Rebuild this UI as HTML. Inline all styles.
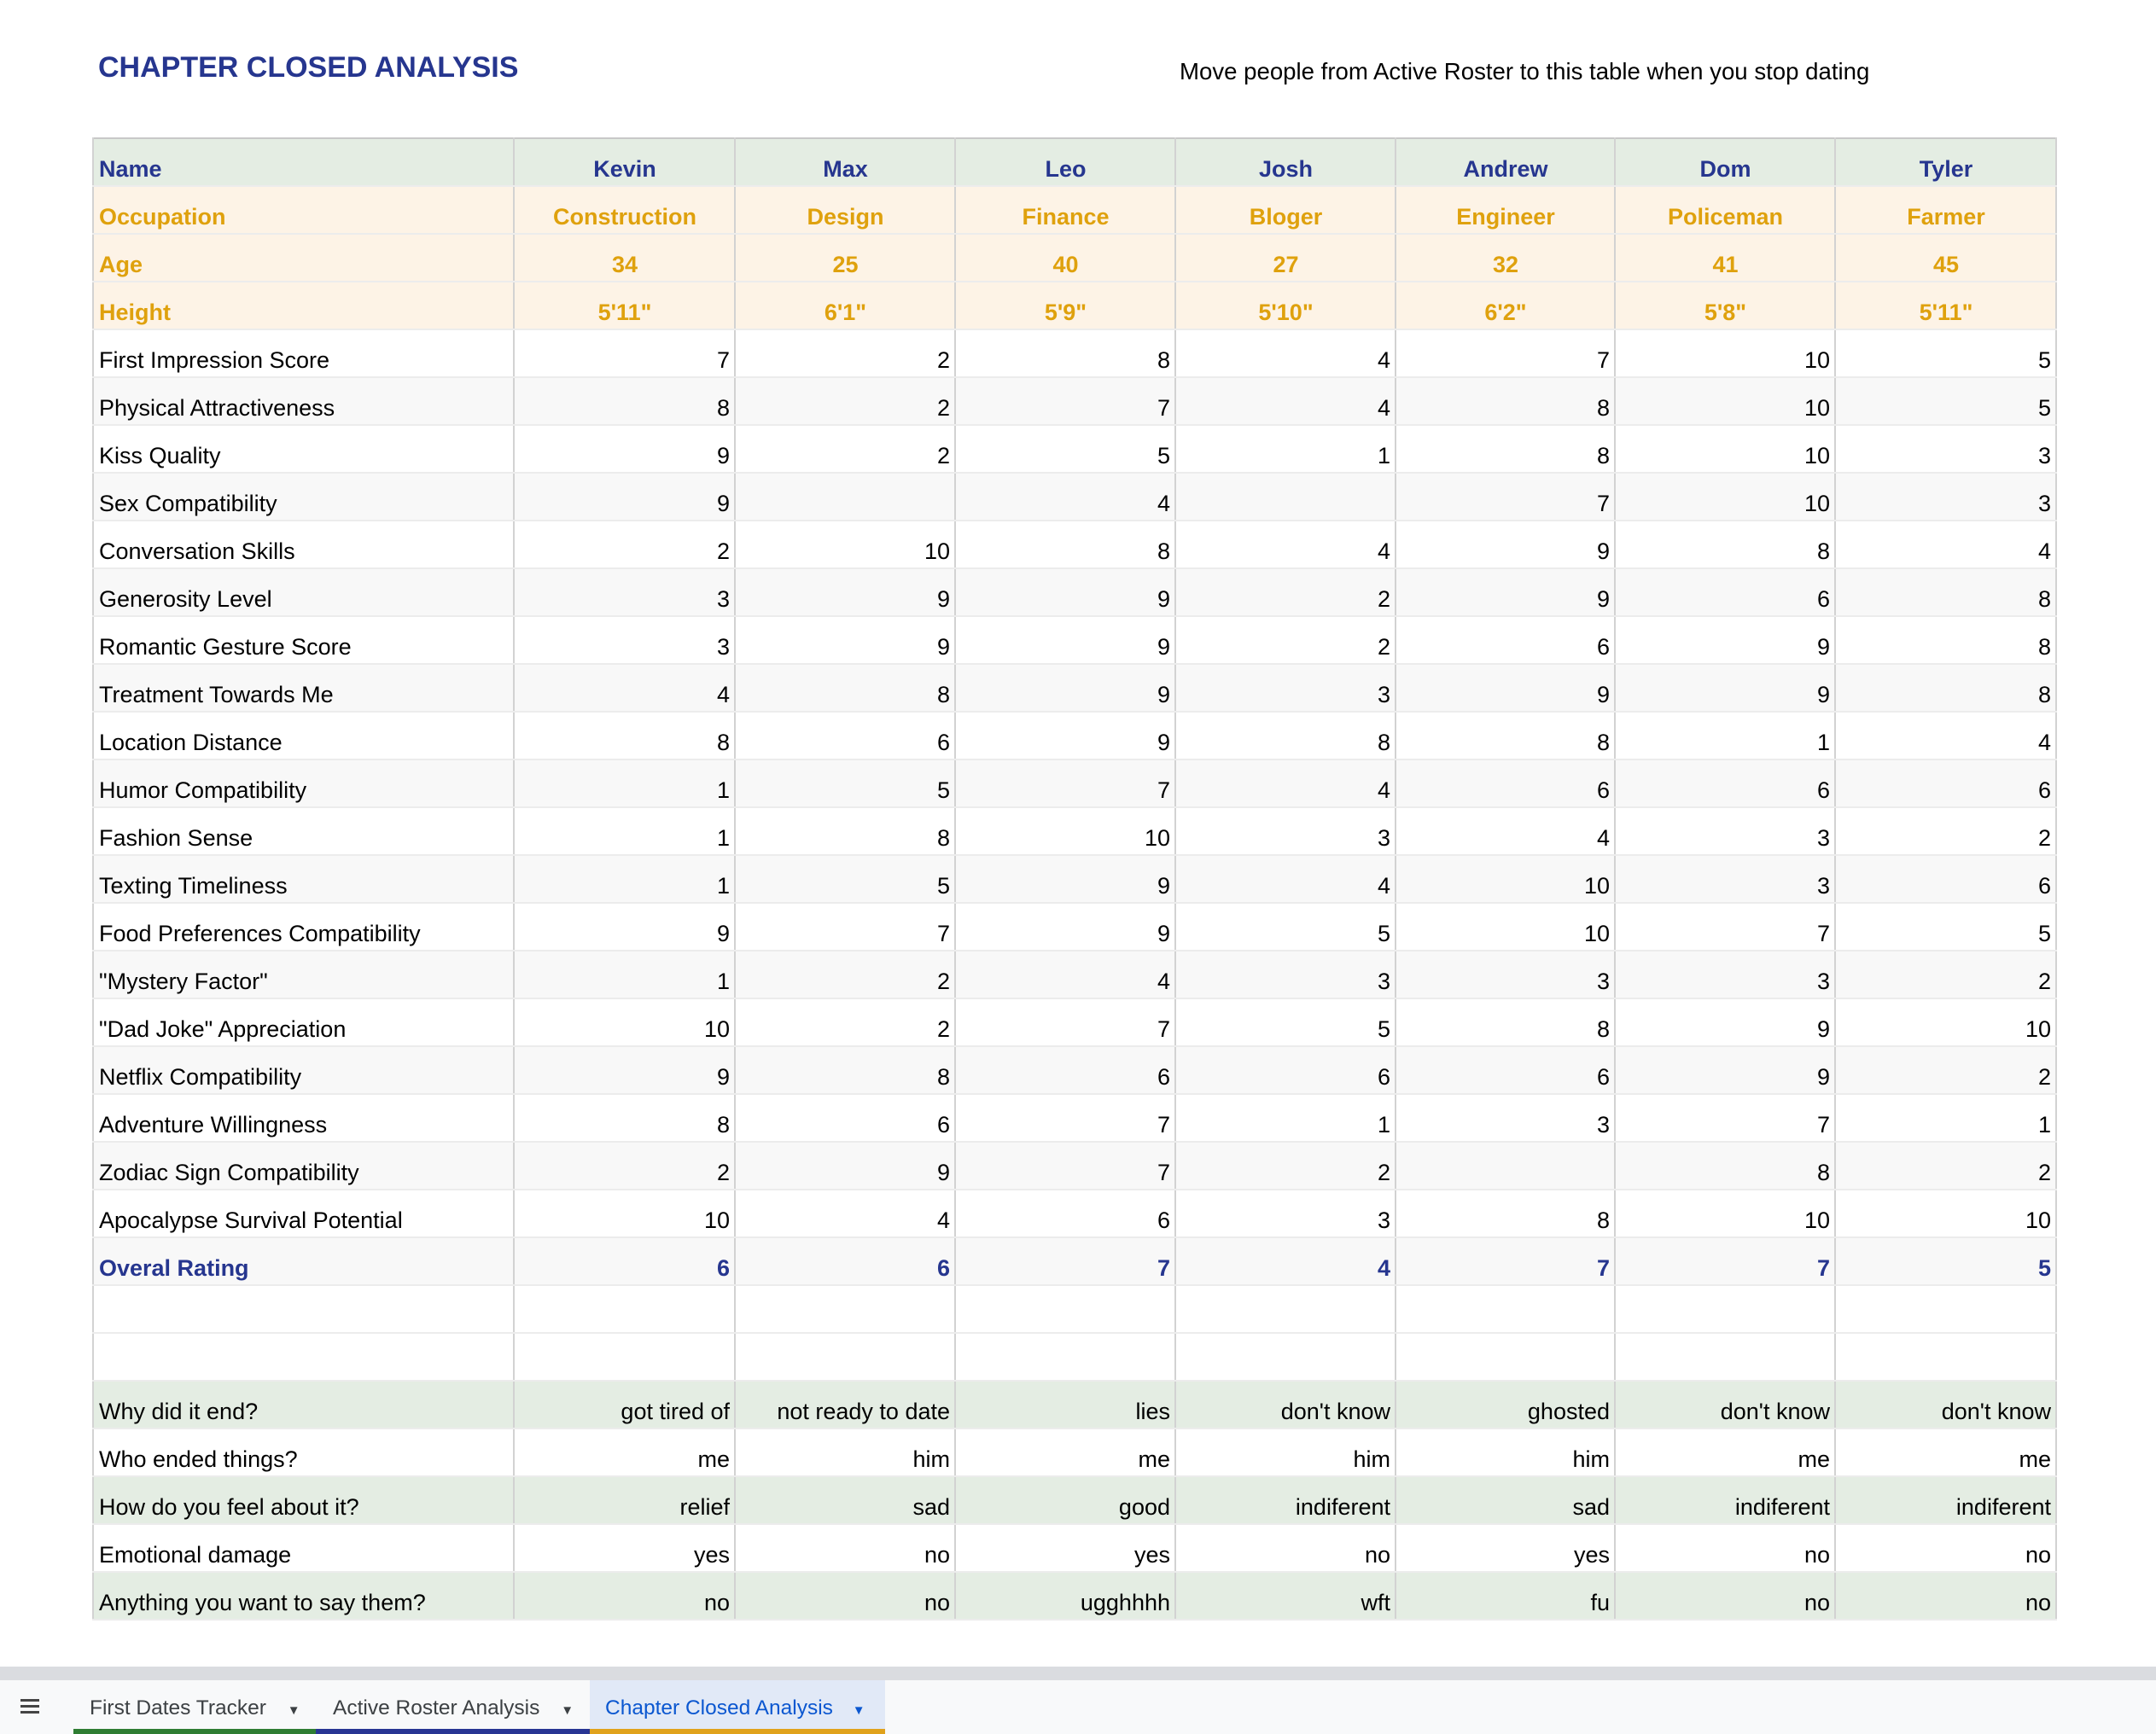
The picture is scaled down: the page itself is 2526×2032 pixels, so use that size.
<!DOCTYPE html>
<html><head><meta charset="utf-8">
<style>
*{box-sizing:border-box;margin:0;padding:0}
body{width:2526px;height:2032px;background:#fff;font-family:"Liberation Sans",Arial,sans-serif;position:relative;overflow:hidden;color:#000}
.title{position:absolute;left:115px;top:60px;font-size:34px;font-weight:bold;color:#26368f}
.note{position:absolute;left:1382px;top:68px;font-size:27.6px;color:#000}
table{position:absolute;left:108px;top:161px;border-collapse:collapse;table-layout:fixed;width:2300px;border-top:2px solid #c8c8c8;border-bottom:2px solid #c8c8c8}
td{height:56px;font-size:27px;vertical-align:bottom;padding:0 5px 3px 6px;border-left:2px solid #d2d2d2;border-right:2px solid #d2d2d2;border-bottom:2px solid #ececec;text-align:right;white-space:nowrap;overflow:hidden}
td:first-child{text-align:left}
tr.h td{background:#e4ede3;color:#26368f;font-weight:bold;text-align:center}
tr.y td{background:#fdf3e6;color:#dfa10d;font-weight:bold;text-align:center}
tr.h td:first-child,tr.y td:first-child{text-align:left}
tr.g td{background:#f8f8f8}
tr.r td{background:#f8f8f8;color:#26368f;font-weight:bold}
tr.gr td{background:#e4ede3}
.tabs{position:absolute;left:0;top:1953px;width:2526px;height:79px;background:#f8f9fa;border-top:16px solid #dadce0}
.tab{position:absolute;top:0;height:63px;font-size:24.5px;color:#3c4043;padding-top:19px}
.tab .ul{position:absolute;left:0;right:0;bottom:0;height:6px}
</style></head><body>
<div class="title">CHAPTER CLOSED ANALYSIS</div>
<div class="note">Move people from Active Roster to this table when you stop dating</div>
<table>
<colgroup><col style="width:493px"><col style="width:259px"><col style="width:258px"><col style="width:258px"><col style="width:258px"><col style="width:257px"><col style="width:258px"><col style="width:259px"></colgroup>
<tr class="h"><td>Name</td><td>Kevin</td><td>Max</td><td>Leo</td><td>Josh</td><td>Andrew</td><td>Dom</td><td>Tyler</td></tr>
<tr class="y"><td>Occupation</td><td>Construction</td><td>Design</td><td>Finance</td><td>Bloger</td><td>Engineer</td><td>Policeman</td><td>Farmer</td></tr>
<tr class="y"><td>Age</td><td>34</td><td>25</td><td>40</td><td>27</td><td>32</td><td>41</td><td>45</td></tr>
<tr class="y"><td>Height</td><td>5'11"</td><td>6'1"</td><td>5'9"</td><td>5'10"</td><td>6'2"</td><td>5'8"</td><td>5'11"</td></tr>
<tr><td>First Impression Score</td><td>7</td><td>2</td><td>8</td><td>4</td><td>7</td><td>10</td><td>5</td></tr>
<tr class="g"><td>Physical Attractiveness</td><td>8</td><td>2</td><td>7</td><td>4</td><td>8</td><td>10</td><td>5</td></tr>
<tr><td>Kiss Quality</td><td>9</td><td>2</td><td>5</td><td>1</td><td>8</td><td>10</td><td>3</td></tr>
<tr class="g"><td>Sex Compatibility</td><td>9</td><td></td><td>4</td><td></td><td>7</td><td>10</td><td>3</td></tr>
<tr><td>Conversation Skills</td><td>2</td><td>10</td><td>8</td><td>4</td><td>9</td><td>8</td><td>4</td></tr>
<tr class="g"><td>Generosity Level</td><td>3</td><td>9</td><td>9</td><td>2</td><td>9</td><td>6</td><td>8</td></tr>
<tr><td>Romantic Gesture Score</td><td>3</td><td>9</td><td>9</td><td>2</td><td>6</td><td>9</td><td>8</td></tr>
<tr class="g"><td>Treatment Towards Me</td><td>4</td><td>8</td><td>9</td><td>3</td><td>9</td><td>9</td><td>8</td></tr>
<tr><td>Location Distance</td><td>8</td><td>6</td><td>9</td><td>8</td><td>8</td><td>1</td><td>4</td></tr>
<tr class="g"><td>Humor Compatibility</td><td>1</td><td>5</td><td>7</td><td>4</td><td>6</td><td>6</td><td>6</td></tr>
<tr><td>Fashion Sense</td><td>1</td><td>8</td><td>10</td><td>3</td><td>4</td><td>3</td><td>2</td></tr>
<tr class="g"><td>Texting Timeliness</td><td>1</td><td>5</td><td>9</td><td>4</td><td>10</td><td>3</td><td>6</td></tr>
<tr><td>Food Preferences Compatibility</td><td>9</td><td>7</td><td>9</td><td>5</td><td>10</td><td>7</td><td>5</td></tr>
<tr class="g"><td>"Mystery Factor"</td><td>1</td><td>2</td><td>4</td><td>3</td><td>3</td><td>3</td><td>2</td></tr>
<tr><td>"Dad Joke" Appreciation</td><td>10</td><td>2</td><td>7</td><td>5</td><td>8</td><td>9</td><td>10</td></tr>
<tr class="g"><td>Netflix Compatibility</td><td>9</td><td>8</td><td>6</td><td>6</td><td>6</td><td>9</td><td>2</td></tr>
<tr><td>Adventure Willingness</td><td>8</td><td>6</td><td>7</td><td>1</td><td>3</td><td>7</td><td>1</td></tr>
<tr class="g"><td>Zodiac Sign Compatibility</td><td>2</td><td>9</td><td>7</td><td>2</td><td></td><td>8</td><td>2</td></tr>
<tr><td>Apocalypse Survival Potential</td><td>10</td><td>4</td><td>6</td><td>3</td><td>8</td><td>10</td><td>10</td></tr>
<tr class="r"><td>Overal Rating</td><td>6</td><td>6</td><td>7</td><td>4</td><td>7</td><td>7</td><td>5</td></tr>
<tr><td></td><td></td><td></td><td></td><td></td><td></td><td></td><td></td></tr>
<tr><td></td><td></td><td></td><td></td><td></td><td></td><td></td><td></td></tr>
<tr class="gr"><td>Why did it end?</td><td>got tired of</td><td>not ready to date</td><td>lies</td><td>don't know</td><td>ghosted</td><td>don't know</td><td>don't know</td></tr>
<tr><td>Who ended things?</td><td>me</td><td>him</td><td>me</td><td>him</td><td>him</td><td>me</td><td>me</td></tr>
<tr class="gr"><td>How do you feel about it?</td><td>relief</td><td>sad</td><td>good</td><td>indiferent</td><td>sad</td><td>indiferent</td><td>indiferent</td></tr>
<tr><td>Emotional damage</td><td>yes</td><td>no</td><td>yes</td><td>no</td><td>yes</td><td>no</td><td>no</td></tr>
<tr class="gr"><td>Anything you want to say them?</td><td>no</td><td>no</td><td>ugghhhh</td><td>wft</td><td>fu</td><td>no</td><td>no</td></tr>
</table>
<div class="tabs">
  <div style="position:absolute;left:24px;top:22px;width:22px;">
    <div style="height:3px;background:#444;margin-bottom:4px"></div>
    <div style="height:3px;background:#444;margin-bottom:4px"></div>
    <div style="height:3px;background:#444"></div>
  </div>
  <div class="tab" style="left:86px;width:284px;padding-left:19px">First Dates Tracker <span style="font-size:15px;margin-left:18px">▼</span><div class="ul" style="background:#2e7d32"></div></div>
  <div class="tab" style="left:370px;width:321px;padding-left:20px">Active Roster Analysis <span style="font-size:15px;margin-left:18px">▼</span><div class="ul" style="background:#283593"></div></div>
  <div class="tab" style="left:691px;width:346px;padding-left:18px;background:#e1e9f7;color:#0b57d0">Chapter Closed Analysis <span style="font-size:15px;margin-left:16px">▼</span><div class="ul" style="background:#e0a21c"></div></div>
</div>
</body></html>
